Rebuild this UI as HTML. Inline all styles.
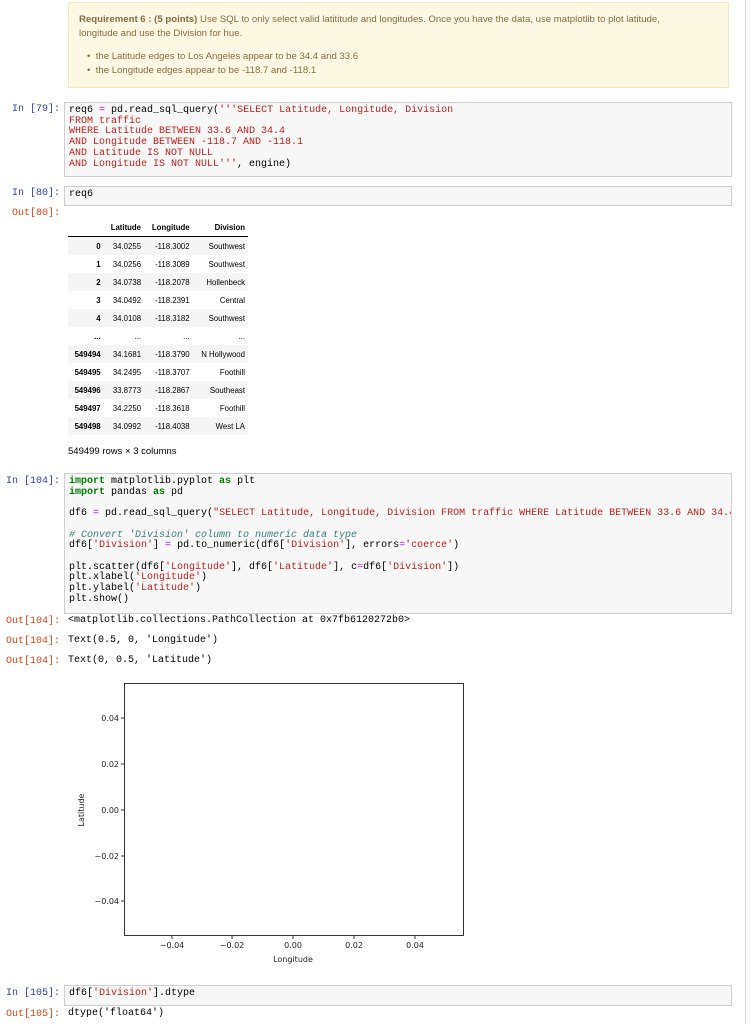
<!DOCTYPE html>
<html><head><meta charset="utf-8"><style>
body{margin:0;width:750px;height:1024px;background:#fff;position:relative;overflow:hidden;font-family:"Liberation Sans",sans-serif}
.a{position:absolute;white-space:pre}
.vl{position:absolute;left:745px;top:0;width:1px;height:1024px;background:#d8d8d8}
.md{position:absolute;left:68px;top:2px;width:659px;height:84px;background:#fcf8e3;border:1px solid #f3e8c2;color:#8a6d3b;font-size:9.6px}
.box{position:absolute;left:64px;width:666px;background:#f7f7f7;border:1px solid #cfcfcf;overflow:hidden}
.code{font-family:"Liberation Mono",monospace;font-size:10px;line-height:10.7px;color:#000}
.pin{color:#303f9f;font-family:"Liberation Mono",monospace;font-size:10px}
.pout{color:#d84315;font-family:"Liberation Mono",monospace;font-size:10px}
.s{color:#ba2121}.k{color:#008000;font-weight:bold}.o{color:#aa22ff}.c{color:#408080;font-style:italic}
table{position:absolute;left:68px;top:219px;border-collapse:collapse;font-size:7.8px;color:#000;width:180px}
td,th{text-align:right;height:18px;padding:0 3px;white-space:nowrap}
th{height:17px}
thead tr{border-bottom:1px solid #000}
tbody tr:nth-child(odd){background:#f5f5f5}
tbody th{font-weight:bold}
</style></head><body>
<div class="vl"></div>
<div class="md">
<div class="a" style="left:10px;top:11px"><b>Requirement 6 : (5 points)</b> Use SQL to only select valid latititude and longitudes. Once you have the data, use matplotlib to plot latitude,</div>
<div class="a" style="left:10px;top:25px">longitude and use the Division for hue.</div>
<div class="a" style="left:18px;top:48px">•&nbsp; the Latitude edges to Los Angeles appear to be 34.4 and 33.6</div>
<div class="a" style="left:18px;top:62px">•&nbsp; the Longitude edges appear to be -118.7 and -118.1</div>
</div>

<div class="a pin" style="left:12px;top:104px">In [79]:</div>
<div class="box" style="top:102px;height:73px"><div class="a code" style="left:4px;top:3px">req6 <span class="o">=</span> pd.read_sql_query(<span class="s">'''SELECT Latitude, Longitude, Division
FROM traffic
WHERE Latitude BETWEEN 33.6 AND 34.4
AND Longitude BETWEEN -118.7 AND -118.1
AND Latitude IS NOT NULL
AND Longitude IS NOT NULL'''</span>, engine)</div></div>

<div class="a pin" style="left:12px;top:188px">In [80]:</div>
<div class="box" style="top:186px;height:18px"><div class="a code" style="left:4px;top:3px">req6</div></div>
<div class="a pout" style="left:12px;top:208px">Out[80]:</div>
<table>
<thead><tr><th></th><th>Latitude</th><th>Longitude</th><th>Division</th></tr></thead>
<tbody>
<tr><th>0</th><td>34.0255</td><td>-118.3002</td><td>Southwest</td></tr>
<tr><th>1</th><td>34.0256</td><td>-118.3089</td><td>Southwest</td></tr>
<tr><th>2</th><td>34.0738</td><td>-118.2078</td><td>Hollenbeck</td></tr>
<tr><th>3</th><td>34.0492</td><td>-118.2391</td><td>Central</td></tr>
<tr><th>4</th><td>34.0108</td><td>-118.3182</td><td>Southwest</td></tr>
<tr><th>...</th><td>...</td><td>...</td><td>...</td></tr>
<tr><th>549494</th><td>34.1681</td><td>-118.3790</td><td>N Hollywood</td></tr>
<tr><th>549495</th><td>34.2495</td><td>-118.3707</td><td>Foothill</td></tr>
<tr><th>549496</th><td>33.8773</td><td>-118.2867</td><td>Southeast</td></tr>
<tr><th>549497</th><td>34.2250</td><td>-118.3618</td><td>Foothill</td></tr>
<tr><th>549498</th><td>34.0992</td><td>-118.4038</td><td>West LA</td></tr>
</tbody></table>
<div class="a" style="left:68px;top:446px;font-size:9.5px">549499 rows × 3 columns</div>

<div class="a pin" style="left:6px;top:476px">In [104]:</div>
<div class="box" style="top:473px;height:139px"><div class="a code" style="left:4px;top:3px"><span class="k">import</span> matplotlib.pyplot <span class="k">as</span> plt
<span class="k">import</span> pandas <span class="k">as</span> pd

df6 <span class="o">=</span> pd.read_sql_query(<span class="s">"SELECT Latitude, Longitude, Division FROM traffic WHERE Latitude BETWEEN 33.6 AND 34.4 AND Longitude BETWEEN -118.7 AND -118.1"</span>, engine)

<span class="c"># Convert 'Division' column to numeric data type</span>
df6[<span class="s">'Division'</span>] <span class="o">=</span> pd.to_numeric(df6[<span class="s">'Division'</span>], errors<span class="o">=</span><span class="s">'coerce'</span>)

plt.scatter(df6[<span class="s">'Longitude'</span>], df6[<span class="s">'Latitude'</span>], c<span class="o">=</span>df6[<span class="s">'Division'</span>])
plt.xlabel(<span class="s">'Longitude'</span>)
plt.ylabel(<span class="s">'Latitude'</span>)
plt.show()</div></div>
<div class="a pout" style="left:6px;top:616px">Out[104]:</div>
<div class="a code" style="left:68px;top:616px">&lt;matplotlib.collections.PathCollection at 0x7fb6120272b0&gt;</div>
<div class="a pout" style="left:6px;top:636px">Out[104]:</div>
<div class="a code" style="left:68px;top:636px">Text(0.5, 0, 'Longitude')</div>
<div class="a pout" style="left:6px;top:656px">Out[104]:</div>
<div class="a code" style="left:68px;top:656px">Text(0, 0.5, 'Latitude')</div>

<svg style="position:absolute;left:0;top:0" width="750" height="1024">
<rect x="124.5" y="683.5" width="339" height="252" fill="none" stroke="#333" stroke-width="1"/>
<g stroke="#333"><line x1="121" y1="718" x2="124" y2="718"/><line x1="121" y1="764" x2="124" y2="764"/><line x1="121" y1="810" x2="124" y2="810"/><line x1="121" y1="856" x2="124" y2="856"/><line x1="121" y1="901" x2="124" y2="901"/>
<line x1="172" y1="936" x2="172" y2="939"/><line x1="232" y1="936" x2="232" y2="939"/><line x1="293" y1="936" x2="293" y2="939"/><line x1="354" y1="936" x2="354" y2="939"/><line x1="415" y1="936" x2="415" y2="939"/></g>
<g font-family="DejaVu Sans,sans-serif" font-size="8" fill="#222">
<text x="119" y="721" text-anchor="end">0.04</text><text x="119" y="767" text-anchor="end">0.02</text><text x="119" y="813" text-anchor="end">0.00</text><text x="119" y="859" text-anchor="end">−0.02</text><text x="119" y="904" text-anchor="end">−0.04</text>
<text x="172" y="948" text-anchor="middle">−0.04</text><text x="232" y="948" text-anchor="middle">−0.02</text><text x="293" y="948" text-anchor="middle">0.00</text><text x="354" y="948" text-anchor="middle">0.02</text><text x="415" y="948" text-anchor="middle">0.04</text>
<text x="293" y="962" text-anchor="middle">Longitude</text>
<text x="84" y="810" text-anchor="middle" transform="rotate(-90 84 810)">Latitude</text>
</g></svg>

<div class="a pin" style="left:6px;top:988px">In [105]:</div>
<div class="box" style="top:985px;height:19px"><div class="a code" style="left:4px;top:3px">df6[<span class="s">'Division'</span>].dtype</div></div>
<div class="a pout" style="left:6px;top:1009px">Out[105]:</div>
<div class="a code" style="left:68px;top:1009px">dtype('float64')</div>
</body></html>
